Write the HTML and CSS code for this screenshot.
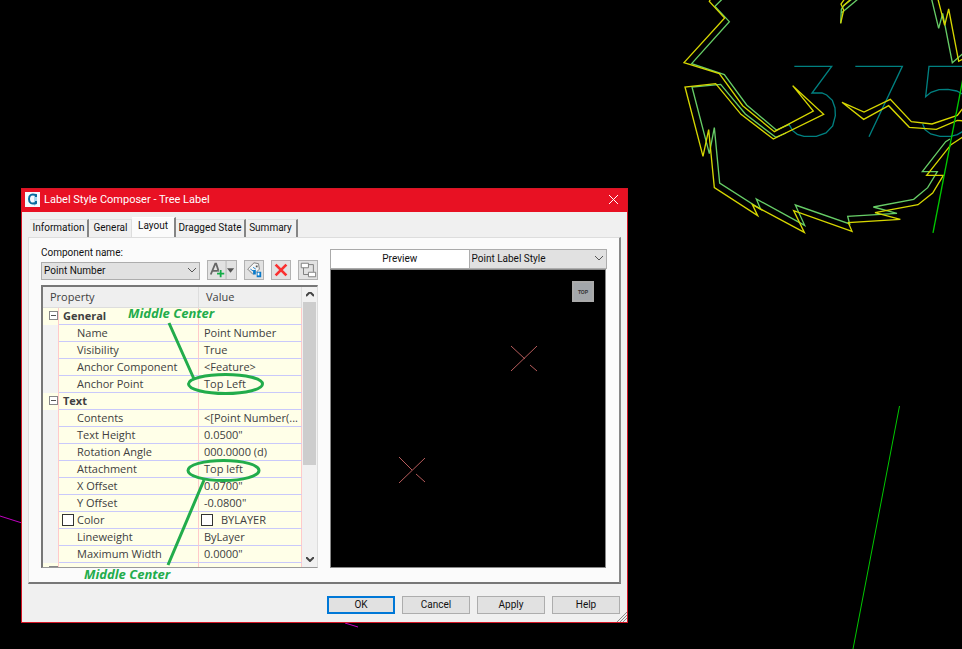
FILE: index.html
```html
<!DOCTYPE html>
<html lang="en">
<head>
<meta charset="utf-8">
<title>Label Style Composer - Tree Label</title>
<link rel="stylesheet" href="styles.css">
</head>
<body>
<main class="workspace">
  <svg class="drawing" width="962" height="649" viewBox="0 0 962 649" aria-hidden="true">
    <g class="plan" transform="translate(670 0) scale(.33333)">
      <g class="teal">
        <path d="M373 199H485L426 279H456L470 285L487 301L495 324L496 347L488 378L468 399L439 409H402L382 403L368 392L357 373"/>
        <path d="M556 199H697L597 410"/>
        <path d="M885 199H777L767 290L783 277L807 269L834 268L860 273L880 283M758 371L765 389L782 402L810 409H842L862 404L882 392"/>
      </g>
      <g class="mint">
        <path d="M156 -2L135 19L178 65L65 191L163 224L230 315L319 390L358 373"/>
        <path d="M348 399L317 412L226 342L152 253L66 261L118 461L133 383L149 549L272 628L259 597L404 676L376 615L539 672L533 649L681 640L610 621L731 598L773 563L802 515H757L827 425L840 417"/>
        <path d="M785 -2L806 85L818 40L847 188L880 160M512 70L514 28L522 16L545 -2M515 38L563 -2"/>
      </g>
      <g class="yellow">
        <path d="M122 -4L118 4L164 54L42 188L148 221L218 317L313 395L430 333L368 257L461 343L310 417L213 343L137 251L45 261L99 469L116 389L133 563L263 647L247 614L403 697L371 632L546 694L535 668L691 658L615 638L744 614L788 579L820 526H770L843 434L880 410"/>
        <path d="M804 -2L824 76L836 27L866 184L882 175M512 70L521 30L513 12L523 -2M520 18L542 -2"/>
        <path d="M885 317L862 346L786 372L724 365L661 298L582 336L516 307L581 358L656 317L718 382L799 388L862 361L885 363"/>
      </g>
      <path class="green" d="M880 230L789 699"/>
    </g>
    <path class="green" d="M899.500 406L853 649"/>
    <path class="magenta" d="M0 516L22 523M345 623L358 627"/>
  </svg>

  <section class="dialog" aria-labelledby="dialog-title">
    <header class="titlebar">
      <svg class="logo" viewBox="0 0 15 15" aria-hidden="true"><path fill="#f5fbff" d="M0 0h15v15H0z"/><path fill="#a9dbf2" d="M9 2l3 1v9l-3 2z"/><path d="M11 5V3Q4 1 4 7t7 4V9" fill="none" stroke="#086b9e" stroke-width="2"/></svg>
      <h1 id="dialog-title">Label Style Composer - Tree Label</h1>
      <button class="close" aria-label="Close"><svg viewBox="0 0 9 9"><path d="M0 0L9 9M9 0L0 9"/></svg></button>
    </header>

    <nav class="tabs" role="tablist">
      <button class="tab info" role="tab">Information</button>
      <button class="tab general" role="tab">General</button>
      <button class="tab active" role="tab" aria-selected="true">Layout</button>
      <button class="tab dragged" role="tab">Dragged State</button>
      <button class="tab summary" role="tab">Summary</button>
    </nav>

    <div class="panel">
      <div class="editor">
        <label class="caption" for="component">Component name:</label>
        <div class="toolbar">
          <div class="combo"><select id="component"><option>Point Number</option></select><svg viewBox="0 0 8 5" aria-hidden="true"><path d="M0 0l4 4 4-4"/></svg></div>
          <button class="tool split" aria-label="Create text component"><svg viewBox="0 0 31 20"><path d="M3 15L8 3h1l4 12M5 11h6" fill="none" stroke="#666" stroke-width="2"/><path d="M14 10v8M10 14h8" stroke="#e2e2e2" stroke-width="4"/><path d="M14 10v8M10 14h8" stroke="#14ad48" stroke-width="2"/><path d="M20 0v20" stroke="#b2b2b2"/><path fill="#555" d="M21 8h8l-4 5z"/></svg></button>
          <button class="tool" aria-label="Copy component"><svg viewBox="0 0 20 20"><path d="M3 9l7-7 5 1 1 6-4 4M3 9l6 6" fill="#f5f5f5" stroke="#777"/><path d="M13 5v2" stroke="#555" stroke-width="2"/><path d="M6 9l3 2m0-4l3 2" stroke="#0879c9"/><path d="M9 10h3v5H9zM13 12h5v6h-5z" fill="#0879c9"/><path d="M14 13h2v3h-2" fill="#fff"/></svg></button>
          <button class="tool" aria-label="Delete component"><svg viewBox="0 0 20 20"><path d="M4 4l12 12M16 4L4 16" stroke="#fa3131" stroke-width="3"/></svg></button>
          <button class="tool" aria-label="Component draw order"><svg viewBox="0 0 20 20" fill="none" stroke="#777"><path d="M5 7v8h7M10 4h6v8"/><path fill="#fff" d="M2.500 2.500h8v5h-8zM10.500 12.500h8v5h-8z"/></svg></button>
        </div>
        <div class="property-list">
          <table>
            <colgroup><col class="gutter-col"><col class="property-col"><col class="value-col"></colgroup>
            <thead><tr><th colspan="2">Property</th><th>Value</th></tr></thead>
            <tbody>
              <tr class="group"><td><button aria-label="Collapse General"></button></td><th>General</th><td></td></tr>
              <tr><td></td><td>Name</td><td>Point Number</td></tr>
              <tr><td></td><td>Visibility</td><td>True</td></tr>
              <tr><td></td><td>Anchor Component</td><td>&lt;Feature&gt;</td></tr>
              <tr><td></td><td>Anchor Point</td><td>Top Left</td></tr>
              <tr class="group"><td><button aria-label="Collapse Text"></button></td><th>Text</th><td></td></tr>
              <tr><td></td><td>Contents</td><td>&lt;[Point Number(...</td></tr>
              <tr><td></td><td>Text Height</td><td>0.0500"</td></tr>
              <tr><td></td><td>Rotation Angle</td><td>000.0000 (d)</td></tr>
              <tr><td></td><td>Attachment</td><td>Top left</td></tr>
              <tr><td></td><td>X Offset</td><td>0.0700"</td></tr>
              <tr><td></td><td>Y Offset</td><td>-0.0800"</td></tr>
              <tr class="color"><td></td><td><label><input type="checkbox">Color</label></td><td><label><input type="checkbox">BYLAYER</label></td></tr>
              <tr><td></td><td>Lineweight</td><td>ByLayer</td></tr>
              <tr><td></td><td>Maximum Width</td><td>0.0000"</td></tr>
              <tr class="group"><td><button aria-label="Collapse group"></button></td><td></td><td></td></tr>
            </tbody>
          </table>
          <div class="scrollbar" aria-hidden="true">
            <svg viewBox="0 0 8 5"><path d="M0 4l4-4 4 4"/></svg>
            <div class="thumb"></div>
            <svg viewBox="0 0 8 5"><path d="M0 0l4 4 4-4"/></svg>
          </div>
        </div>
      </div>

      <div class="preview">
        <div class="preview-head">
          <span>Preview</span>
          <div class="combo"><select aria-label="Preview style"><option>Point Label Style</option></select><svg viewBox="0 0 8 5" aria-hidden="true"><path d="M0 0l4 4 4-4"/></svg></div>
        </div>
        <div class="viewport">
          <svg viewBox="0 0 274 297" aria-hidden="true"><path d="M180 76l14 13M199 95l7 6M206 76l-26 25M68 187l13 13M85 204l9 8M94 188l-26 25"/></svg>
          <button class="view-cube">TOP</button>
        </div>
      </div>
    </div>

    <footer class="actions">
      <button class="primary">OK</button>
      <button>Cancel</button>
      <button>Apply</button>
      <button>Help</button>
      <svg class="grip" viewBox="0 0 10 10" aria-hidden="true"><path d="M0 10L10 0M3 10l7-7M6 10l4-4"/></svg>
    </footer>
  </section>

  <svg class="notes" width="962" height="649" viewBox="0 0 962 649">
    <ellipse cx="225.500" cy="384" rx="37" ry="9.500"/>
    <ellipse cx="223.500" cy="470.500" rx="35.500" ry="10"/>
    <path d="M169 323L194 379M204 480L168 565"/>
    <text x="128" y="318">Middle Center</text>
    <text x="84" y="579">Middle Center</text>
  </svg>
</main>
</body>
</html>
```
FILE: styles.css
```css
* { box-sizing: border-box; }
body { margin: 0; background: #000; color: #111; font: 10px/12px Roboto, sans-serif; }
button, select { font: inherit; color: inherit; padding: 0; border-radius: 0; }
.workspace { position: relative; min-height: 100vh; overflow: hidden; }
.drawing, .notes { position: absolute; top: 0; left: 0; }
.drawing { fill: none; stroke-width: 1px; }
.plan { stroke-width: 4px; }
.teal { stroke: #008080; }
.mint { stroke: #66cc66; }
.yellow { stroke: #d6d600; }
.green { stroke: #00c800; }
.magenta { stroke: #c000c0; }

.dialog { position: absolute; top: 188px; left: 21px; width: 607px; max-width: 100%; background: #f0f0f0; border: 1px solid #d51626; }
.titlebar { display: flex; align-items: center; height: 23px; padding: 0 9px 2px 3px; background: #e81123; color: #fff; }
.titlebar h1 { flex: 1; margin: 0 0 0 4px; font-size: 11px; font-weight: 400; }
.logo { width: 15px; height: 15px; }
.close { display: flex; background: none; border: 0; }
.close svg { width: 9px; height: 9px; fill: none; stroke: #fff; overflow: visible; }

.tabs { display: flex; align-items: flex-end; height: 25px; padding: 0 8px; }
.tab { height: 18px; padding: 0 1px 2px; background: #f0f0f0; border: 0 solid #858585; border-top: 1px solid #e0e0e0; border-right-width: 2px; white-space: nowrap; }
.info { width: 59px; }
.general { width: 42px; margin-left: 1px; border-right: 1px solid #ddd; }
.active { width: 44px; height: 20px; padding-bottom: 3px; background: #fbfbfb; border-top-color: #fff; }
.dragged { width: 70px; }
.summary { width: 50px; margin-left: 2px; padding-right: 4px; }

.panel { display: grid; grid-template-columns: 1fr 1fr; gap: 12px; margin: 0 6px; padding: 9px 12px 14px; background: #fbfbfb; border: 1px solid #ddd; border-right: 2px solid #888; border-bottom: 2px solid #777; }
.editor, .preview { min-width: 0; display: flex; flex-direction: column; }
.caption { margin-bottom: 1px; }
.toolbar { display: flex; gap: 7px; height: 20px; margin-bottom: 5px; }
.combo { position: relative; flex: 1; display: flex; }
.combo select { width: 100%; appearance: none; padding-left: 2px; background: #e1e1e1; border: 1px solid #adadad; }
.toolbar select { height: 18px; margin-top: 2px; }
.combo svg { position: absolute; right: 4px; top: 8px; width: 8px; height: 5px; fill: none; stroke: #555; overflow: visible; }
.tool { width: 20px; background: #e2e2e2; border: 1px solid #b2b2b2; display: flex; }
.tool svg { width: 100%; height: 100%; }
.split { width: 30px; }

.property-list { display: flex; height: 283px; overflow: hidden; background: #f3f3f3; border: 1px solid #999; border-left: 2px solid #777; border-top: 2px solid #777; border-right-color: #ddd; }
table { flex: 1; align-self: flex-start; table-layout: fixed; border-collapse: separate; border-spacing: 0; color: #404040; font: 11px/12px "Open Sans", sans-serif; }
.gutter-col { width: 16px; }
.property-col { width: 140px; }
tr { height: 17px; }
td, th { height: 17px; padding: 0; font-weight: 400; text-align: left; white-space: nowrap; background: #ffffe8; border: 0 solid #ffcaca; border-right-width: 1px; border-bottom: 1px solid #c9c9fb; }
thead th { height: 21px; padding-left: 7px; background: #efefef; border-right: 1px solid #ddd; border-bottom-color: #ddd; }
tbody td:first-child { background: #f3f3f3; border-bottom: 0; }
tbody td:nth-child(2) { padding-left: 18px; }
tbody td:nth-child(3) { padding-left: 5px; }
tbody th { padding-left: 4px; font-weight: 700; }
tbody .group td:first-child { padding-bottom: 2px; background: #ffffe8; }
.group button { display: block; width: 9px; height: 9px; margin-left: 6px; border: 1px solid #888; background: linear-gradient(#555, #555) center / 5px 1px no-repeat #fff; }
.color label { display: flex; align-items: center; }
.color input { appearance: none; width: 12px; height: 12px; margin: 0 3px 0 0; border: 1px solid #333; background: #fff; }
.color td:nth-child(2) { padding-left: 3px; }
.color td:nth-child(3) { padding-left: 2px; }
.color td:nth-child(3) input { margin-right: 8px; }
.scrollbar { width: 15px; display: flex; flex-direction: column; align-items: center; padding: 5px 0; background: #f1f1f1; }
.scrollbar svg { width: 8px; height: 5px; fill: none; stroke: #444; stroke-width: 2px; }
.scrollbar svg:last-child { margin-top: auto; }
.thumb { width: 13px; height: 163px; margin-top: 5px; background: #cdcdcd; }

.preview { padding-top: 2px; }
.preview-head { display: grid; grid-template-columns: 1fr 1fr; height: 20px; }
.preview-head span { display: grid; place-items: center; border: 1px solid #aaa; border-right: 0; background: #fff; }
.preview-head .combo svg { top: 7px; }
.viewport { position: relative; flex: 1; margin-right: 1px; background: #000; border: 1px solid #888; }
.viewport svg { position: absolute; inset: 0; width: 100%; height: 100%; fill: none; stroke: #b75c5c; }
.view-cube { position: absolute; top: 11px; right: 11px; width: 22px; height: 21px; background: #a2a6aa; border: 2px solid #aaa; color: #333; font: bold 5px/8px "Liberation Sans", sans-serif; }

.actions { display: flex; justify-content: flex-end; gap: 7px; padding: 12px 7px 8px; position: relative; }
.actions button { width: 68px; height: 18px; background: #e1e1e1; border: 1px solid #adadad; }
.actions .primary { border: 2px solid #0078d7; }
.grip { position: absolute; right: 0; bottom: 0; width: 10px; height: 10px; stroke: #888; }

.notes { pointer-events: none; fill: none; stroke: #22ac4b; stroke-width: 3px; }
.notes text { fill: #22ac4b; stroke: none; font: italic 700 13px "Open Sans", sans-serif; }
```
